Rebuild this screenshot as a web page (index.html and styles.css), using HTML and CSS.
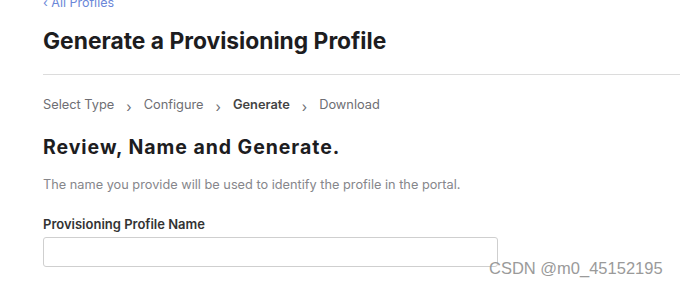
FILE: index.html
```html
<!DOCTYPE html>
<html lang="en">
<head>
<meta charset="utf-8">
<link rel="stylesheet" href="styles.css">
</head>
<body>
<div class="page">
  <a class="back" href="#">‹ All Profiles</a>
  <h1 class="title">Generate a Provisioning Profile</h1>
  <div class="divider"></div>
  <nav class="steps">
    <span class="step">Select Type</span>
    <span class="chev">›</span>
    <span class="step">Configure</span>
    <span class="chev">›</span>
    <span class="step current">Generate</span>
    <span class="chev">›</span>
    <span class="step">Download</span>
  </nav>
  <h2 class="heading">Review, Name and Generate.</h2>
  <p class="desc">The name you provide will be used to identify the profile in the portal.</p>
  <label class="label" for="pname">Provisioning Profile Name</label>
  <input class="input" id="pname" type="text">
</div>
<div class="watermark">CSDN @m0_45152195</div>
</body>
</html>
```
FILE: styles.css
```css
html, body {
  margin: 0;
  padding: 0;
  background: #fff;
  overflow: hidden;
}
body {
  width: 680px;
  height: 286px;
  position: relative;
  font-family: Inter, "Noto Sans", sans-serif;
}
.page {
  display: flex;
  flex-direction: column;
  align-items: stretch;
  padding-left: 43px;
  margin-top: -5px;
}
.back {
  align-self: flex-start;
  font-size: 12.5px;
  line-height: 16px;
  color: #6b87d8;
  text-decoration: none;
}
.title {
  margin: 15px 0 0 0;
  font-size: 22.8px;
  line-height: 30px;
  font-weight: 700;
  color: #1d1d1f;
  letter-spacing: 0;
}
.divider {
  margin-top: 18px;
  height: 1px;
  background: #dcdcdc;
}
.steps {
  display: flex;
  align-items: center;
  gap: 11px;
  margin-top: 21px;
  font-size: 12.8px;
  line-height: 18px;
  color: #6e6e73;
}
.chev {
  font-size: 14px;
  color: #6e6e73;
  padding: 0 1px;
  position: relative;
  top: 2px;
}
.step.current {
  font-weight: 600;
  color: #444;
}
.heading {
  margin: 20px 0 0 0;
  font-size: 19.5px;
  line-height: 26px;
  font-weight: 700;
  color: #1d1d1f;
  letter-spacing: 0.95px;
}
.desc {
  margin: 17px 0 0 0;
  font-size: 12.75px;
  line-height: 16px;
  color: #86868b;
}
.label {
  margin-top: 23px;
  font-size: 13px;
  line-height: 16px;
  font-weight: 600;
  color: #333;
}
.input {
  margin-top: 5px;
  width: 455px;
  height: 30px;
  box-sizing: border-box;
  border: 1px solid #cfcfcf;
  border-radius: 3px;
  background: #fff;
}
.watermark {
  position: absolute;
  left: 489px;
  top: 258px;
  font-family: "Liberation Sans", Arial, sans-serif;
  font-size: 16.5px;
  line-height: 20px;
  color: #9a9a9a;
}
```
